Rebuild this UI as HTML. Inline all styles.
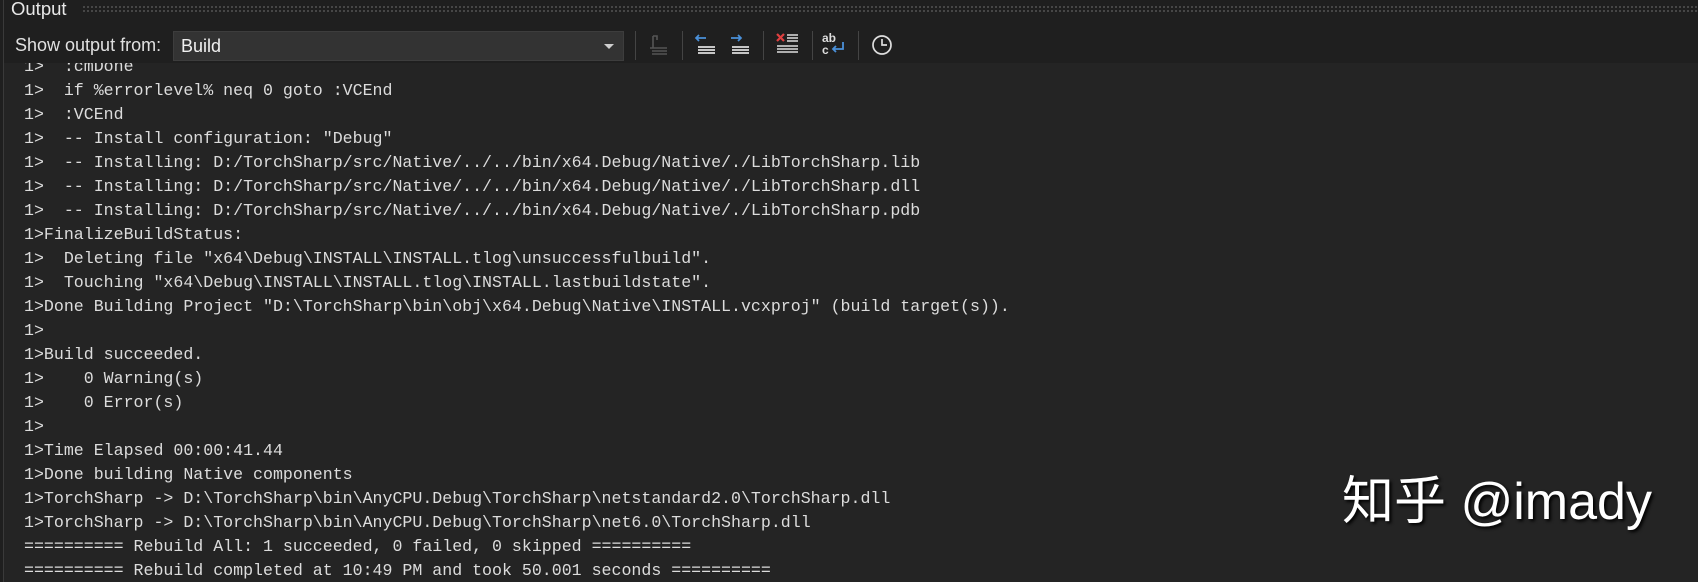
<!DOCTYPE html>
<html><head><meta charset="utf-8"><style>
html,body{margin:0;padding:0;width:1698px;height:582px;overflow:hidden;background:#1f1f1f;}
body{position:relative;font-family:"Liberation Sans",sans-serif;}
.lb{position:absolute;left:3px;top:0;width:1px;height:582px;background:#3a3a3a;}
.title{position:absolute;left:11px;top:-2px;color:#e8e8e8;font-size:18.5px;line-height:22px;}
.grip{position:absolute;left:82px;right:0;top:5px;height:9px;background-image:radial-gradient(#4a4a4a 1px,transparent 1.2px);background-size:4px 4px;}
.show{position:absolute;left:15px;top:35px;color:#e0e0e0;font-size:18px;}
.dd{position:absolute;left:173px;top:31px;width:451px;height:30px;background:#333333;border:1px solid #3d3d3d;box-sizing:border-box;}
.dd span{position:absolute;left:7px;top:4px;color:#f0f0f0;font-size:18px;}
.dd i{position:absolute;right:9px;top:12px;border-left:5px solid transparent;border-right:5px solid transparent;border-top:5px solid #cfcfcf;}
.sep{position:absolute;top:31px;width:1px;height:29px;background:#444;}
.content{position:absolute;left:4px;top:63px;right:0;bottom:0;background:#242424;overflow:hidden;}
pre{position:absolute;left:20px;top:-8px;margin:0;font-family:"Liberation Mono",monospace;font-size:16.6px;line-height:24px;color:#dcdcdc;}
.wm{position:absolute;left:1342px;top:472px;font-family:"Liberation Sans","Noto Sans CJK SC",sans-serif;font-size:52px;line-height:60px;color:#fff;text-shadow:2px 2px 3px #000;white-space:nowrap;}
svg{position:absolute;}
</style></head><body>
<div class="lb"></div>
<div class="title">Output</div><div class="grip"></div>
<div class="show">Show output from:</div>
<div class="dd"><span>Build</span><i></i></div>
<div class="sep" style="left:635px"></div>
<svg style="left:645px;top:32px" width="26" height="26"><g stroke="#555" stroke-width="1.6" fill="none"><path d="M8 4v12M8 4h4v4"/><path d="M5 16h17M7 19h15M7 22h15"/></g></svg>
<div class="sep" style="left:682px"></div>
<svg style="left:693px;top:32px" width="26" height="26"><path d="M13 6H3M6 3L3 6l3 3" stroke="#4a90d9" stroke-width="1.7" fill="none"/><path d="M5 15h17M5 18h17M5 21h17" stroke="#ddd" stroke-width="1.7"/></svg>
<svg style="left:727px;top:32px" width="26" height="26"><path d="M4 6h10M11 3l3 3-3 3" stroke="#4a90d9" stroke-width="1.7" fill="none"/><path d="M5 15h17M5 18h17M5 21h17" stroke="#ddd" stroke-width="1.7"/></svg>
<div class="sep" style="left:763px"></div>
<svg style="left:774px;top:31px" width="28" height="26"><path d="M3 3l7 7M10 3l-7 7" stroke="#e04040" stroke-width="2.2"/><path d="M13 4h11M13 7h11M13 10h11M3 15h21M3 18h21M3 21h21" stroke="#ddd" stroke-width="1.5"/></svg>
<div class="sep" style="left:812px"></div>
<svg style="left:820px;top:30px" width="28" height="28"><text x="2" y="12" font-family="Liberation Sans" font-size="12" font-weight="bold" fill="#ddd">ab</text><text x="2" y="24" font-family="Liberation Sans" font-size="12" font-weight="bold" fill="#ddd">c</text><path d="M23 12v7h-10M16 16l-3 3 3 3" stroke="#4a90d9" stroke-width="1.8" fill="none"/></svg>
<div class="sep" style="left:858px"></div>
<svg style="left:870px;top:33px" width="26" height="26"><circle cx="12" cy="12" r="9" stroke="#ddd" stroke-width="1.7" fill="none"/><path d="M12 6v6h5" stroke="#ddd" stroke-width="1.7" fill="none"/></svg>
<div class="content"><pre>1>  :cmDone
1>  if %errorlevel% neq 0 goto :VCEnd
1>  :VCEnd
1>  -- Install configuration: "Debug"
1>  -- Installing: D:/TorchSharp/src/Native/../../bin/x64.Debug/Native/./LibTorchSharp.lib
1>  -- Installing: D:/TorchSharp/src/Native/../../bin/x64.Debug/Native/./LibTorchSharp.dll
1>  -- Installing: D:/TorchSharp/src/Native/../../bin/x64.Debug/Native/./LibTorchSharp.pdb
1>FinalizeBuildStatus:
1>  Deleting file "x64\Debug\INSTALL\INSTALL.tlog\unsuccessfulbuild".
1>  Touching "x64\Debug\INSTALL\INSTALL.tlog\INSTALL.lastbuildstate".
1>Done Building Project "D:\TorchSharp\bin\obj\x64.Debug\Native\INSTALL.vcxproj" (build target(s)).
1>
1>Build succeeded.
1>    0 Warning(s)
1>    0 Error(s)
1>
1>Time Elapsed 00:00:41.44
1>Done building Native components
1>TorchSharp -> D:\TorchSharp\bin\AnyCPU.Debug\TorchSharp\netstandard2.0\TorchSharp.dll
1>TorchSharp -> D:\TorchSharp\bin\AnyCPU.Debug\TorchSharp\net6.0\TorchSharp.dll
========== Rebuild All: 1 succeeded, 0 failed, 0 skipped ==========
========== Rebuild completed at 10:49 PM and took 50.001 seconds ==========</pre></div>
<div class="wm">知乎 @imady</div>
</body></html>
